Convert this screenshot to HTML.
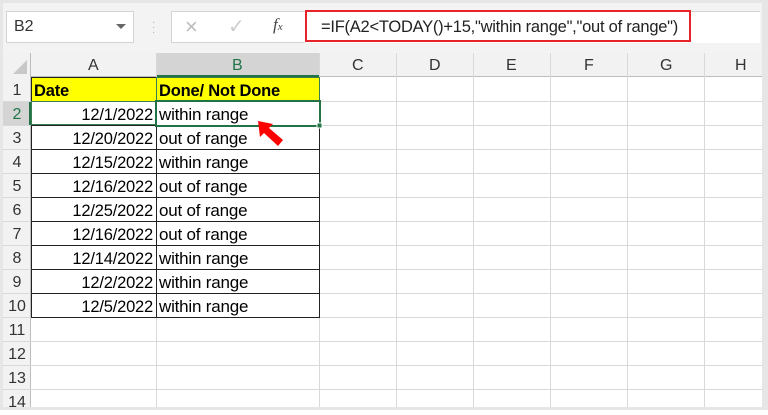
<!DOCTYPE html>
<html><head><style>
*{margin:0;padding:0;box-sizing:border-box}
body{width:768px;height:410px;overflow:hidden;background:#fff;font-family:"Liberation Sans",Calibri,sans-serif;position:relative}
.a{position:absolute}
.t{font-size:15px;color:#000;line-height:24px;white-space:nowrap}
.c{font-size:16.5px;letter-spacing:-0.2px}
</style></head><body>
<div class="a" style="left:0;top:0;width:768px;height:410px;background:#e6e6e6"></div>
<div class="a" style="left:3px;top:3px;width:759px;height:50px;background:#f3f3f3"></div>
<div class="a" style="left:6px;top:11px;width:128px;height:32px;background:#fff;border:1px solid #d4d4d4"></div>
<div class="a t" style="left:14px;top:15px;color:#333;font-size:16px">B2</div>
<div class="a" style="left:116px;top:24px;width:0;height:0;border-left:5px solid transparent;border-right:5px solid transparent;border-top:5px solid #666"></div>
<div class="a" style="left:152px;top:20px;color:#aaa;font-size:10px;line-height:5px">·<br>·<br>·</div>
<div class="a" style="left:171px;top:11px;width:135px;height:32px;background:#fff;border:1px solid #d4d4d4"></div>
<div class="a" style="left:185px;top:14px;font-size:22px;color:#bbb">×</div>
<div class="a" style="left:228px;top:14px;font-size:20px;color:#ccc">✓</div>
<div class="a" style="left:273px;top:15px;font-size:17px;color:#444;font-family:'Liberation Serif',serif;font-style:italic">f<span style="font-size:11px">x</span></div>
<div class="a" style="left:305px;top:11px;width:455px;height:32px;background:#fff;border-top:1px solid #d4d4d4"></div>
<div class="a" style="left:305px;top:10px;width:386px;height:32px;border:2px solid #e8232a"></div>
<div class="a t" style="left:321px;top:15px;font-size:16.5px;letter-spacing:-0.25px;color:#222">=IF(A2&lt;TODAY()+15,"within range","out of range")</div>
<div class="a" style="left:3px;top:53px;width:759px;height:354px;background:#fff"></div>
<div class="a" style="left:3px;top:53px;width:759px;height:24px;background:#f2f2f2;border-bottom:1px solid #bdbdbd"></div>
<div class="a" style="left:3px;top:53px;width:28px;height:354px;background:#f2f2f2;border-right:1px solid #bdbdbd"></div>
<div class="a" style="left:156px;top:53px;width:164px;height:24px;background:#d4d4d4;border-bottom:2px solid #217346"></div>
<div class="a" style="left:3px;top:101px;width:28px;height:24px;background:#d4d4d4;border-right:2px solid #217346"></div>
<div class="a" style="left:13px;top:60px;width:0;height:0;border-left:14px solid transparent;border-bottom:14px solid #c8c8c8"></div>
<svg class="a" style="left:0;top:0" width="768" height="410">
<g stroke="#d9d9d9" stroke-width="1">
<line x1="156.5" y1="53" x2="156.5" y2="407"/><line x1="319.5" y1="53" x2="319.5" y2="407"/>
<line x1="396.5" y1="53" x2="396.5" y2="407"/><line x1="473.5" y1="53" x2="473.5" y2="407"/>
<line x1="550.5" y1="53" x2="550.5" y2="407"/><line x1="627.5" y1="53" x2="627.5" y2="407"/>
<line x1="704.5" y1="53" x2="704.5" y2="407"/>
<line x1="3" y1="101.5" x2="762" y2="101.5"/><line x1="3" y1="125.5" x2="762" y2="125.5"/>
<line x1="3" y1="149.5" x2="762" y2="149.5"/><line x1="3" y1="173.5" x2="762" y2="173.5"/>
<line x1="3" y1="197.5" x2="762" y2="197.5"/><line x1="3" y1="221.5" x2="762" y2="221.5"/>
<line x1="3" y1="245.5" x2="762" y2="245.5"/><line x1="3" y1="269.5" x2="762" y2="269.5"/>
<line x1="3" y1="293.5" x2="762" y2="293.5"/><line x1="3" y1="317.5" x2="762" y2="317.5"/>
<line x1="3" y1="341.5" x2="762" y2="341.5"/><line x1="3" y1="365.5" x2="762" y2="365.5"/>
<line x1="3" y1="389.5" x2="762" y2="389.5"/>
</g>
<rect x="31" y="77" width="289" height="24" fill="#ffff00"/>
<g stroke="#222" stroke-width="1" fill="none">
<rect x="31.5" y="77.5" width="288" height="240"/>
<line x1="156.5" y1="77" x2="156.5" y2="318"/>
<line x1="31" y1="101.5" x2="320" y2="101.5"/><line x1="31" y1="125.5" x2="320" y2="125.5"/>
<line x1="31" y1="149.5" x2="320" y2="149.5"/><line x1="31" y1="173.5" x2="320" y2="173.5"/>
<line x1="31" y1="197.5" x2="320" y2="197.5"/><line x1="31" y1="221.5" x2="320" y2="221.5"/>
<line x1="31" y1="245.5" x2="320" y2="245.5"/><line x1="31" y1="269.5" x2="320" y2="269.5"/>
<line x1="31" y1="293.5" x2="320" y2="293.5"/>
</g>
<rect x="156.5" y="77.5" width="163" height="23" stroke="#3a7d4f" fill="none"/>
<rect x="31.5" y="101.5" width="125" height="23" stroke="#3a7d4f" fill="none"/>
<rect x="156" y="101" width="164" height="25" stroke="#217346" stroke-width="2" fill="none"/>
<rect x="317" y="123" width="5" height="5" fill="#217346" stroke="#fff" stroke-width="1"/>
<path d="M258 121 L273 124 L269 128 L283 140 L278 146 L264 133 L260 137 Z" fill="#f00"/>
</svg>
<div class="a t" style="left:0;top:54px;width:768px;height:24px;color:#333;font-size:16px">
<span class="a" style="left:88px">A</span><span class="a" style="left:232px;color:#217346">B</span><span class="a" style="left:352px">C</span><span class="a" style="left:429px">D</span><span class="a" style="left:506px">E</span><span class="a" style="left:584px">F</span><span class="a" style="left:660px">G</span><span class="a" style="left:735px">H</span></div>
<div class="a t" style="left:3px;top:79px;width:28px;text-align:center;color:#333;line-height:24px;font-size:16px">1<br><span style="color:#217346">2</span><br>3<br>4<br>5<br>6<br>7<br>8<br>9<br>10<br>11<br>12<br>13<br>14</div>
<div class="a t c" style="left:34px;top:79px;font-weight:bold">Date</div>
<div class="a t c" style="left:159px;top:79px;font-weight:bold">Done/ Not Done</div>
<div class="a t c" style="left:31px;top:103px;width:122px;text-align:right">12/1/2022<br>12/20/2022<br>12/15/2022<br>12/16/2022<br>12/25/2022<br>12/16/2022<br>12/14/2022<br>12/2/2022<br>12/5/2022</div>
<div class="a t c" style="left:159px;top:103px;font-size:17px">within range<br>out of range<br>within range<br>out of range<br>out of range<br>out of range<br>within range<br>within range<br>within range</div>
</body></html>
